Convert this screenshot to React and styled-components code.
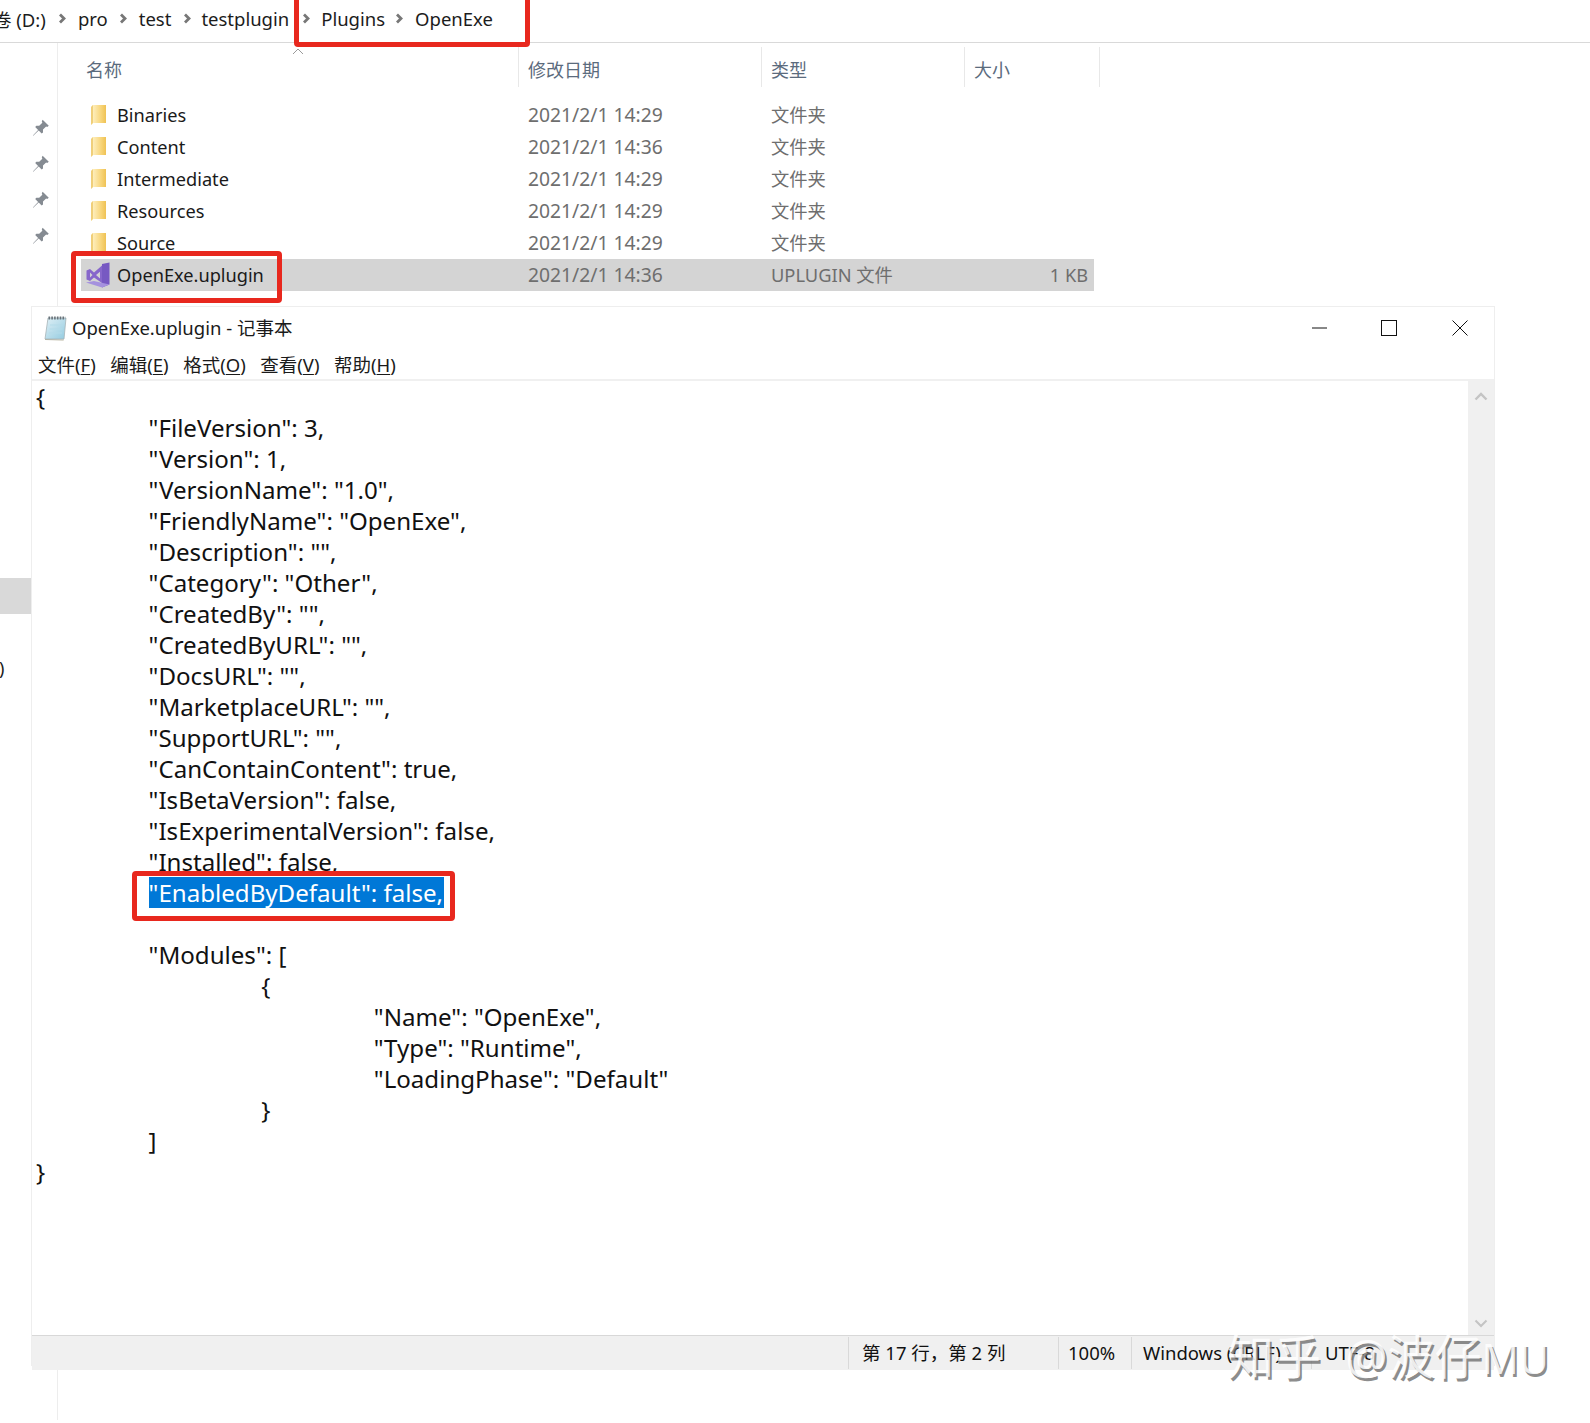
import React from 'react'
import styled, { createGlobalStyle } from 'styled-components'

const sans = `'Noto Sans', 'Noto Sans CJK SC', sans-serif`

const GlobalStyle = createGlobalStyle`
  html, body { margin: 0; padding: 0; background: #fff; }
  body { font-family: ${sans}; color: #111; }
`

const Page = styled.div`
  position: relative;
  width: 1590px;
  height: 1423px;
  overflow: hidden;
  background: #fff;
`

const AddressBar = styled.div`
  display: flex;
  align-items: center;
  height: 37px;
  padding-bottom: 5px;
  margin-left: -7px;
  border-bottom: 1px solid #d9d9d9;
  font-size: 18.5px;
  color: #1c1c1c;
  white-space: nowrap;
`

const Crumb = styled.span`
  margin-right: ${p => p.$gap}px;
`

const Chevron = styled.svg`
  width: 8px;
  height: 11px;
  margin-right: ${p => p.$gap}px;
  flex: none;
`

const ExplorerBody = styled.div`
  display: flex;
  height: 263px;
`

const NavPane = styled.div`
  width: 51px;
  border-right: 1px solid #ededed;
  display: flex;
  flex-direction: column;
  align-items: flex-end;
  gap: 16px;
  padding: 75px 6px 0 0;
`

const FileList = styled.div`
  margin-left: 23px;
  width: 1018px;
`

const HeaderRow = styled.div`
  position: relative;
  display: grid;
  grid-template-columns: 438px 243px 203px 135px;
  height: 40px;
  margin-top: 4px;
  margin-bottom: 12px;
  align-items: center;
`

const HeaderCell = styled.div`
  height: 40px;
  line-height: 46px;
  padding-left: ${p => p.$first ? 5 : 9}px;
  border-right: 1px solid #e8e8e8;
  font-size: 18px;
  color: #5b6b7d;
`

const SortArrow = styled.svg`
  position: absolute;
  left: 211px;
  top: 1px;
  width: 12px;
  height: 7px;
`

const FileRow = styled.div`
  display: grid;
  grid-template-columns: 438px 243px 203px 129px;
  height: 32px;
  align-items: center;
  width: 1013px;
  background: ${p => p.$selected ? '#d4d4d4' : 'transparent'};
  font-size: 18.2px;
`

const NameCell = styled.div`
  display: flex;
  align-items: center;
  color: #1a1a1a;
  padding-left: ${p => p.$vs ? 4 : 9}px;
  gap: ${p => p.$vs ? 6 : 9}px;
`

const MetaCell = styled.div`
  color: #6e6e6e;
  padding-left: 9px;
  padding-bottom: 2px;
  white-space: nowrap;
  font-size: ${p => p.$date ? 19.3 : 18.3}px;
`

const SizeCell = styled.div`
  color: #6e6e6e;
  text-align: right;
  padding-right: 6px;
`

const WindowRow = styled.div`
  display: flex;
  height: 1060px;
`

const LeftSliver = styled.div`
  width: 31px;
  flex: none;
  padding-top: 272px;
  font-size: 18px;
  color: #1c1c1c;
`

const NavHighlight = styled.div`
  height: 36px;
  background: #d9d9d9;
  margin-bottom: 42px;
`

const ClippedParen = styled.div`
  margin-left: -1px;
  line-height: 24px;
`

const NotepadWindow = styled.div`
  width: 1462px;
  display: flex;
  flex-direction: column;
  border: 1px solid #eeeeee;
  border-bottom: none;
  background: #fff;
`

const TitleBar = styled.div`
  display: flex;
  align-items: center;
  height: 42px;
  padding-left: 11px;
  font-size: 18.5px;
  color: #1a1a1a;
  flex: none;
`

const TitleText = styled.span`
  margin-left: 5px;
  padding-bottom: 2px;
  flex: 1;
`

const WindowButtons = styled.div`
  display: flex;
  align-items: center;
`

const WindowButton = styled.svg`
  width: 16px;
  height: 16px;
  margin-right: ${p => p.$gap}px;
`

const MenuBar = styled.div`
  display: flex;
  align-items: center;
  gap: 14.5px;
  height: 30px;
  padding: 0 0 0 6px;
  flex: none;
  border-bottom: 2px solid #f0f0f0;
  font-size: 18.5px;
  color: #1a1a1a;
`

const MenuKey = styled.span`
  text-decoration: underline;
  text-underline-offset: 2px;
  text-decoration-thickness: 1px;
`

const EditorArea = styled.div`
  display: flex;
  height: 954px;
  flex: none;
`

const Editor = styled.div`
  flex: 1;
  padding: 0 0 0 4px;
  font-size: 24.1px;
  line-height: 31px;
  color: #111;
  white-space: pre;
`

const EditorLine = styled.div`
  height: 31px;
  padding-left: ${p => p.$level * 112.6}px;
`

const Selected = styled.span`
  background: #0078d7;
  color: #fff;
  display: inline-block;
  padding-right: 1px;
`

const Scrollbar = styled.div`
  width: 26px;
  background: #f0f0f0;
  display: flex;
  flex-direction: column;
  justify-content: space-between;
  align-items: center;
  padding: 11px 0 7px;
  box-sizing: border-box;
`

const ScrollArrow = styled.svg`
  width: 14px;
  height: 9px;
`

const StatusBar = styled.div`
  display: flex;
  align-items: center;
  height: 34px;
  flex: none;
  background: #f0f0f0;
  border-top: 1px solid #d8d8d8;
  font-size: 18.5px;
  color: #111;
  white-space: nowrap;
`

const StatusCell = styled.div`
  width: ${p => p.$width}px;
  height: 32px;
  line-height: 32px;
  padding-left: ${p => p.$pad}px;
  box-sizing: border-box;
  border-left: ${p => p.$noLine ? 'none' : '1px solid #d9d9d9'};
`

const BottomStub = styled.div`
  width: 57px;
  height: 54px;
  border-right: 1px solid #ededed;
`

const RedFrame = styled.div`
  position: absolute;
  left: ${p => p.$x}px;
  top: ${p => p.$y}px;
  width: ${p => p.$w}px;
  height: ${p => p.$h}px;
  box-sizing: border-box;
  border: 5px solid #e8281e;
  border-radius: 4px;
`

const Watermark = styled.div`
  position: absolute;
  left: 1227px;
  top: 1324px;
  font-size: 47px;
  line-height: 64px;
  word-spacing: 12px;
  white-space: nowrap;
  color: rgba(255, 255, 255, 0.85);
  text-shadow: 2px 3px 0 rgba(110, 110, 110, 0.8);
`

const WatermarkLatin = styled.span`
  font-size: 41px;
`

const Arrow = ({ gap }) => (
  <Chevron $gap={gap} viewBox="0 0 8 11">
    <path d="M2 1.5 L6 5.5 L2 9.5" fill="none" stroke="#777" strokeWidth="2.8" />
  </Chevron>
)

const FolderIcon = () => (
  <svg width="18" height="22" viewBox="0 0 18 22">
    <defs>
      <linearGradient id="folderFill" x1="0" x2="1" y1="0" y2="0">
        <stop offset="0" stopColor="#fff4cc" />
        <stop offset="0.65" stopColor="#f8d67c" />
        <stop offset="1" stopColor="#efc254" />
      </linearGradient>
    </defs>
    <path d="M3 1 H16 V19 H3 L1 21 V3 Z" fill="url(#folderFill)" />
    <path d="M1 3 L3 1 V19 L1 21 Z" fill="#f0cf7a" />
  </svg>
)

const VsIcon = () => (
  <svg width="26" height="26" viewBox="0 0 26 26">
    <path d="M17 2 L24.5 0.5 V22.5 L17 25.5 Z" fill="#7759c2" />
    <path d="M1 20.5 L17 25.5 L24.5 22.5 L9 19 Z" fill="#a591de" />
    <path d="M1.5 8.5 L5 7 L9 10.5 L17 3.5 V21 L9 15.5 L5 19 L1.5 17.5 Z M5 10.5 V15.5 L7.5 13 Z M11 13 L15 9.8 V16.5 Z" fill="#8767cb" fillRule="evenodd" />
  </svg>
)

const PinIcon = () => (
  <svg width="20" height="20" viewBox="0 0 18 18">
    <path d="M10.5 1.5 L16 7 L14.6 8 L13.6 7.6 L10.8 10.4 L10.8 13 L9.6 14 L6.9 11.2 L2 16 L1.7 15.7 L6.4 10.7 L3.8 8.2 L4.8 7 L7.4 7 L10.2 4.2 L9.7 3 Z" fill="#858b92" />
  </svg>
)

const NotepadIcon = () => (
  <svg width="24" height="26" viewBox="0 0 24 26">
    <defs>
      <linearGradient id="padFill" x1="0" x2="1" y1="0" y2="1">
        <stop offset="0" stopColor="#e0f0f6" />
        <stop offset="1" stopColor="#93cbe0" />
      </linearGradient>
    </defs>
    <path d="M2 24 L21 24.5 L20.5 25.5 L2 25 Z" fill="#b7b29c" />
    <path d="M5 3 H23 L21 24 H2 Z" fill="url(#padFill)" stroke="#a7b4b8" strokeWidth="0.8" />
    <path d="M5.5 3 H22.5" stroke="#68737a" strokeWidth="3" strokeDasharray="1.6 1.2" />
    <path d="M7 10 H20 M6.5 14 H19.5 M6 18 H19" stroke="#b4dbe9" strokeWidth="1" />
  </svg>
)

const files = [
  { name: 'Binaries', date: '2021/2/1 14:29' },
  { name: 'Content', date: '2021/2/1 14:36' },
  { name: 'Intermediate', date: '2021/2/1 14:29' },
  { name: 'Resources', date: '2021/2/1 14:29' },
  { name: 'Source', date: '2021/2/1 14:29' },
]

const lines = [
  [0, '{'],
  [1, '"FileVersion": 3,'],
  [1, '"Version": 1,'],
  [1, '"VersionName": "1.0",'],
  [1, '"FriendlyName": "OpenExe",'],
  [1, '"Description": "",'],
  [1, '"Category": "Other",'],
  [1, '"CreatedBy": "",'],
  [1, '"CreatedByURL": "",'],
  [1, '"DocsURL": "",'],
  [1, '"MarketplaceURL": "",'],
  [1, '"SupportURL": "",'],
  [1, '"CanContainContent": true,'],
  [1, '"IsBetaVersion": false,'],
  [1, '"IsExperimentalVersion": false,'],
  [1, '"Installed": false,'],
  [1, '"EnabledByDefault": false,', true],
  [1, ''],
  [1, '"Modules": ['],
  [2, '{'],
  [3, '"Name": "OpenExe",'],
  [3, '"Type": "Runtime",'],
  [3, '"LoadingPhase": "Default"'],
  [2, '}'],
  [1, ']'],
  [0, '}'],
]

const menus = [
  ['文件(', 'F', ')'],
  ['编辑(', 'E', ')'],
  ['格式(', 'O', ')'],
  ['查看(', 'V', ')'],
  ['帮助(', 'H', ')'],
]

function App() {
  return (
    <Page>
      <GlobalStyle />
      <AddressBar>
        <Crumb $gap={12}>卷 (D:)</Crumb>
        <Arrow gap={12} />
        <Crumb $gap={11}>pro</Crumb>
        <Arrow gap={12} />
        <Crumb $gap={12}>test</Crumb>
        <Arrow gap={10} />
        <Crumb $gap={13}>testplugin</Crumb>
        <Arrow gap={11} />
        <Crumb $gap={10}>Plugins</Crumb>
        <Arrow gap={12} />
        <Crumb $gap={0}>OpenExe</Crumb>
      </AddressBar>

      <ExplorerBody>
        <NavPane>
          <PinIcon />
          <PinIcon />
          <PinIcon />
          <PinIcon />
        </NavPane>
        <FileList>
          <HeaderRow>
            <SortArrow viewBox="0 0 12 7">
              <path d="M1 6 L6 1 L11 6" fill="none" stroke="#9a9a9a" strokeWidth="1" />
            </SortArrow>
            <HeaderCell $first>名称</HeaderCell>
            <HeaderCell>修改日期</HeaderCell>
            <HeaderCell>类型</HeaderCell>
            <HeaderCell>大小</HeaderCell>
          </HeaderRow>
          {files.map(f => (
            <FileRow key={f.name}>
              <NameCell><FolderIcon />{f.name}</NameCell>
              <MetaCell $date>{f.date}</MetaCell>
              <MetaCell>文件夹</MetaCell>
              <SizeCell />
            </FileRow>
          ))}
          <FileRow $selected>
            <NameCell $vs><VsIcon />OpenExe.uplugin</NameCell>
            <MetaCell $date>2021/2/1 14:36</MetaCell>
            <MetaCell>UPLUGIN 文件</MetaCell>
            <SizeCell>1 KB</SizeCell>
          </FileRow>
        </FileList>
      </ExplorerBody>

      <WindowRow>
        <LeftSliver>
          <NavHighlight />
          <ClippedParen>)</ClippedParen>
        </LeftSliver>
        <NotepadWindow>
          <TitleBar>
            <NotepadIcon />
            <TitleText>OpenExe.uplugin - 记事本</TitleText>
            <WindowButtons>
              <WindowButton $gap={53} viewBox="0 0 16 16"><path d="M0 8 H15" stroke="#111" strokeWidth="1" /></WindowButton>
              <WindowButton $gap={55} viewBox="0 0 16 16"><rect x="0.5" y="0.5" width="15" height="15" fill="none" stroke="#111" strokeWidth="1" /></WindowButton>
              <WindowButton $gap={26} viewBox="0 0 16 16"><path d="M0.5 0.5 L15.5 15.5 M15.5 0.5 L0.5 15.5" stroke="#111" strokeWidth="1" /></WindowButton>
            </WindowButtons>
          </TitleBar>
          <MenuBar>
            {menus.map(([a, k, b]) => (
              <span key={k}>{a}<MenuKey>{k}</MenuKey>{b}</span>
            ))}
          </MenuBar>
          <EditorArea>
            <Editor>
              {lines.map(([level, text, selected], i) => (
                <EditorLine key={i} $level={level}>
                  {selected ? <Selected>{text}</Selected> : text}
                </EditorLine>
              ))}
            </Editor>
            <Scrollbar>
              <ScrollArrow viewBox="0 0 14 9">
                <path d="M1.5 7.5 L7 2 L12.5 7.5" fill="none" stroke="#c4c4c4" strokeWidth="2.4" />
              </ScrollArrow>
              <ScrollArrow viewBox="0 0 14 9">
                <path d="M1.5 1.5 L7 7 L12.5 1.5" fill="none" stroke="#c4c4c4" strokeWidth="2" />
              </ScrollArrow>
            </Scrollbar>
          </EditorArea>
          <StatusBar>
            <StatusCell $noLine $width={816} $pad={0} />
            <StatusCell $width={210} $pad={13}>第 17 行，第 2 列</StatusCell>
            <StatusCell $width={73} $pad={9}>100%</StatusCell>
            <StatusCell $width={180} $pad={11}>Windows (CRLF)</StatusCell>
            <StatusCell $width={120} $pad={13}>UTF-8</StatusCell>
          </StatusBar>
        </NotepadWindow>
      </WindowRow>

      <BottomStub />

      <RedFrame $x={294} $y={-6} $w={236} $h={53} />
      <RedFrame $x={71} $y={251} $w={211} $h={52} />
      <RedFrame $x={132} $y={871} $w={323} $h={50} />
      <Watermark>知乎 @波仔<WatermarkLatin>MU</WatermarkLatin></Watermark>
    </Page>
  )
}

export default App
